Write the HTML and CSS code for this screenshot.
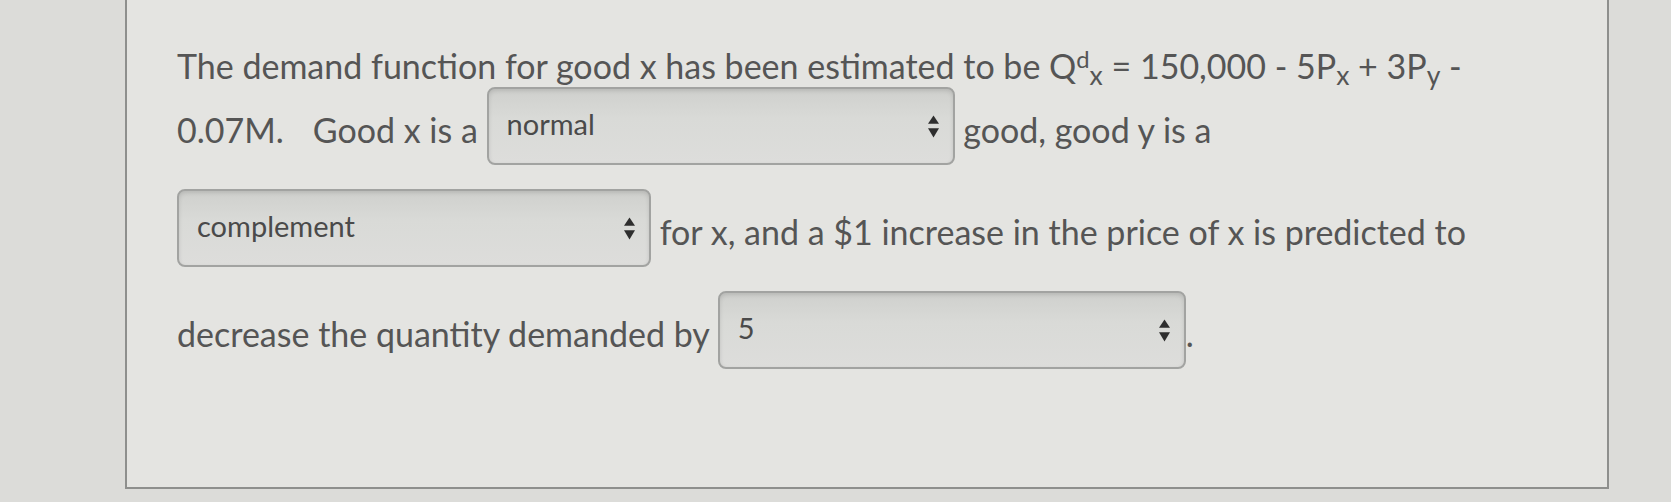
FILE: index.html
```html
<!DOCTYPE html>
<html lang="en">
<head>
<meta charset="utf-8">
<title>Demand function question</title>
<link rel="stylesheet" href="styles.css">
</head>
<body>
<div class="page">
  <div class="panel">
    <p class="question">The demand function for good x has been estimated to be Q<sup>d</sup><sub>x</sub> = 150,000 - 5P<sub>x</sub> + 3P<sub>y</sub> - 0.07M.<span class="gap"></span>Good x is a <span class="select sel-1"><span class="value">normal</span><svg class="arrows" viewBox="0 0 12 24" width="11" height="23"><polygon points="6,0 12,9 0,9"/><polygon points="0,14 12,14 6,24"/></svg></span> good, good y is a <span class="select sel-2"><span class="value">complement</span><svg class="arrows" viewBox="0 0 12 24" width="11" height="23"><polygon points="6,0 12,9 0,9"/><polygon points="0,14 12,14 6,24"/></svg></span> for x, and a $1 increase in the price of x is predicted to decrease the quantity demanded by <span class="select sel-3"><span class="value">5</span><svg class="arrows" viewBox="0 0 12 24" width="11" height="23"><polygon points="6,0 12,9 0,9"/><polygon points="0,14 12,14 6,24"/></svg></span>.</p>
  </div>
</div>
</body>
</html>
```

FILE: styles.css
```css
html, body {
  margin: 0;
  padding: 0;
  background: #dcdcd9;
}

.page {
  width: 1671px;
  height: 502px;
  overflow: hidden;
}

.panel {
  box-sizing: border-box;
  margin-left: 125px;
  width: 1484px;
  height: 489px;
  border: 2px solid #8e8f8d;
  border-top: none;
  background: #e4e4e1;
  padding: 48px 60px 0 50px;
}

.question {
  margin: 0;
  font-family: Lato, "Open Sans", sans-serif;
  font-size: 34px;
  line-height: 36px;
  color: #555555;
}

.gap {
  display: inline-block;
  width: 29px;
}

.question sup,
.question sub {
  font-size: 0.7em;
  line-height: 0;
}

.question sup {
  vertical-align: 11px;
}

.question sub {
  font-size: 0.78em;
  vertical-align: -6px;
}

.select {
  display: inline-flex;
  align-items: flex-start;
  justify-content: space-between;
  box-sizing: border-box;
  height: 78px;
  margin: 3px 0 21px;
  padding: 20px 14px 0 18px;
  border: 2px solid #a2a3a1;
  border-radius: 8px;
  background: linear-gradient(#cfd0cd, #d9dad7 40%, #dddddb);
  box-shadow: inset 0 2px 4px rgba(0, 0, 0, 0.12);
  vertical-align: 8px;
}

.sel-1 { width: 468px; }
.sel-2 { width: 474px; }
.sel-3 { width: 468px; }

.value {
  font-size: 29px;
  line-height: 1;
  color: #4a4a4a;
}

.arrows {
  align-self: center;
  margin-top: -20px;
  fill: #2e2e2e;
}
```
